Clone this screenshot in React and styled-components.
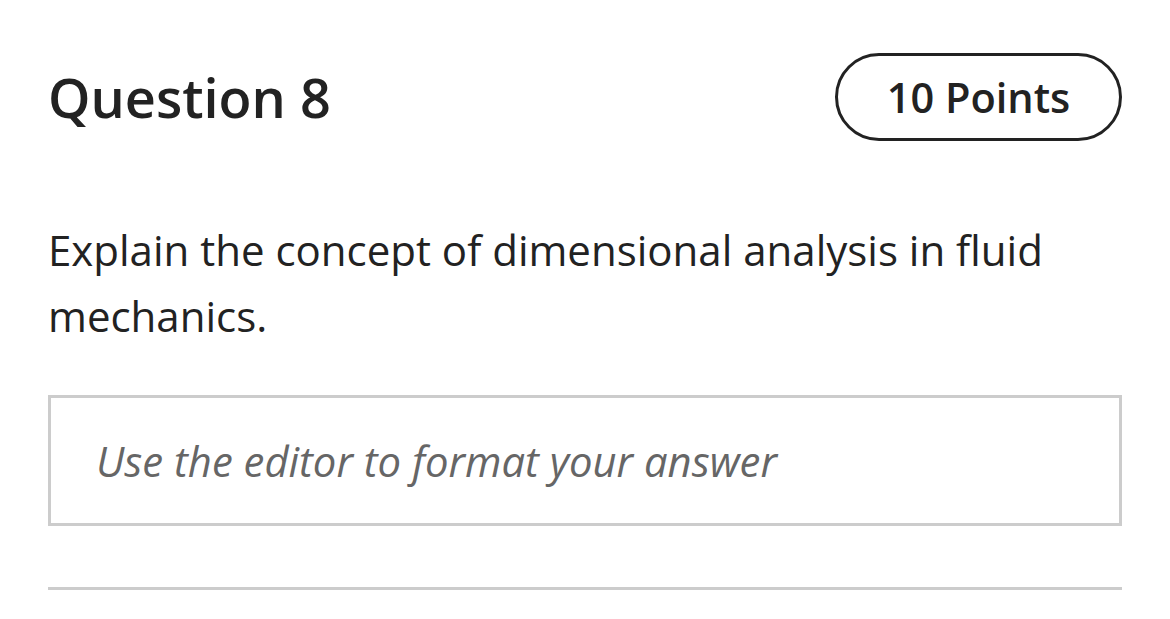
import React from 'react';
import styled, { createGlobalStyle } from 'styled-components';

const GlobalStyle = createGlobalStyle`
  body {
    margin: 0;
    background: #fff;
    font-family: "Open Sans", "Noto Sans", sans-serif;
    color: #222;
  }
`;

const Page = styled.main`
  padding: 53px 48px 0;
`;

const Header = styled.header`
  display: flex;
  align-items: center;
  justify-content: space-between;
`;

const Title = styled.h1`
  margin: 0;
  font-size: 54px;
  font-weight: 600;
  color: #222;
`;

const PointsBadge = styled.div`
  box-sizing: border-box;
  height: 88px;
  width: 287px;
  display: flex;
  align-items: center;
  justify-content: center;
  border: 3px solid #222;
  border-radius: 44px;
  font-size: 41.5px;
  font-weight: 600;
  color: #222;
`;

const Prompt = styled.p`
  margin: 76px 0 0;
  font-size: 42px;
  line-height: 66px;
  color: #222;
`;

const AnswerBox = styled.div`
  box-sizing: border-box;
  margin-top: 46px;
  height: 131px;
  display: flex;
  align-items: center;
  padding-left: 45px;
  border: 3px solid #ccc;
`;

const Placeholder = styled.span`
  font-style: italic;
  font-size: 41.8px;
  color: #666;
`;

const Divider = styled.hr`
  margin: 61px 0 0;
  border: none;
  height: 3px;
  background: #ccc;
`;

function App() {
  return (
    <>
      <GlobalStyle />
      <Page>
        <Header>
          <Title>Question 8</Title>
          <PointsBadge>10 Points</PointsBadge>
        </Header>
        <Prompt>Explain the concept of dimensional analysis in fluid mechanics.</Prompt>
        <AnswerBox>
          <Placeholder>Use the editor to format your answer</Placeholder>
        </AnswerBox>
        <Divider />
      </Page>
    </>
  );
}

export default App;
